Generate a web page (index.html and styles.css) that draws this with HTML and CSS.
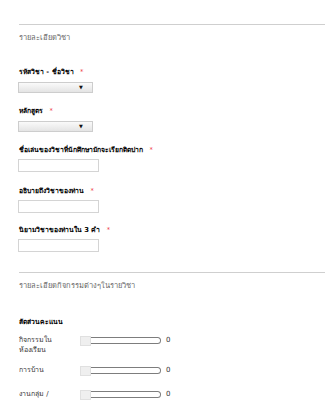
FILE: index.html
```html
<!DOCTYPE html>
<html lang="th">
<head>
<meta charset="utf-8">
<link rel="stylesheet" href="styles.css">
</head>
<body>
<div class="form">
  <div class="section">
    <div class="rule"></div>
    <div class="section-title">รายละเอียดวิชา</div>
  </div>

  <div class="field f-first">
    <div class="label">รหัสวิชา - ชื่อวิชา <span class="req">*</span></div>
    <div class="select"><span class="arrow">▼</span></div>
  </div>

  <div class="field">
    <div class="label">หลักสูตร <span class="req">*</span></div>
    <div class="select"><span class="arrow">▼</span></div>
  </div>

  <div class="field">
    <div class="label">ชื่อเล่นของวิชาที่นักศึกษามักจะเรียกติดปาก <span class="req">*</span></div>
    <div class="input"></div>
  </div>

  <div class="field f4">
    <div class="label">อธิบายถึงวิชาของท่าน <span class="req">*</span></div>
    <div class="input"></div>
  </div>

  <div class="field f5">
    <div class="label">นิยามวิชาของท่านใน 3 คำ <span class="req">*</span></div>
    <div class="input"></div>
  </div>

  <div class="section s2">
    <div class="rule"></div>
    <div class="section-title">รายละเอียดกิจกรรมต่างๆในรายวิชา</div>
  </div>

  <div class="group">
    <div class="label">สัดส่วนคะแนน</div>
    <div class="row r1">
      <div class="row-label">กิจกรรมใน<br>ห้องเรียน</div>
      <div class="slider"><span class="thumb"></span><span class="track"></span></div>
      <span class="val">0</span>
    </div>
    <div class="row r2">
      <div class="row-label">การบ้าน</div>
      <div class="slider"><span class="thumb"></span><span class="track"></span></div>
      <span class="val">0</span>
    </div>
    <div class="row r3">
      <div class="row-label">งานกลุ่ม /<br>Project</div>
      <div class="slider"><span class="thumb"></span><span class="track"></span></div>
      <span class="val">0</span>
    </div>
  </div>
</div>
</body>
</html>
```
FILE: styles.css
```css
html, body {
  margin: 0;
  padding: 0;
  background: #fff;
}
body {
  font-family: "DejaVu Sans", "Noto Sans", sans-serif;
  color: #000;
  width: 325px;
  height: 400px;
  overflow: hidden;
}
.form {
  padding-top: 24px;
  padding-left: 19px;
}
.section .rule {
  height: 1px;
  background: #cfcfcf;
}
.section-title {
  font-size: 7.5px;
  color: #666;
  margin-top: 8px;
  line-height: 10px;
}
.field {
  margin-top: 14px;
}
.f-first {
  margin-top: 25px;
}
.f4 {
  margin-top: 15px;
}
.f5 {
  margin-top: 13px;
}
.label {
  font-size: 6.8px;
  font-weight: bold;
  line-height: 9px;
  color: #000;
}
.req {
  color: #ee2a33;
  margin-left: 4px;
  font-weight: normal;
}
.select {
  margin-top: 5px;
  margin-left: -1px;
  width: 73px;
  height: 9px;
  border: 1px solid #cdcdcd;
  background: linear-gradient(#fafafa, #e4e4e4);
  position: relative;
}
.arrow {
  position: absolute;
  left: 60px;
  top: 1px;
  font-size: 5px;
  line-height: 7px;
  color: #111;
}
.input {
  margin-top: 4px;
  margin-left: -1px;
  width: 79px;
  height: 11px;
  border: 1px solid #d4d4d4;
  background: #fff;
}
.s2 {
  margin-top: 20px;
}
.group {
  margin-top: 27px;
}
.row {
  display: flex;
  align-items: flex-start;
  margin-top: 8px;
}
.r2 { margin-top: 10px; }
.r3 { margin-top: 14px; }
.row-label {
  font-size: 7px;
  line-height: 10px;
  color: #333;
  width: 61px;
}
.slider {
  display: flex;
  align-items: center;
  width: 81px;
  height: 9px;
  margin-top: 1px;
}
.thumb {
  width: 9px;
  height: 8px;
  background: #efefef;
  border: 1px solid #e0e0e0;
}
.track {
  flex: 1;
  height: 5px;
  border: 1px solid #7d7d7d;
  border-left: none;
  border-radius: 0 4px 4px 0;
  background: #fff;
}
.val {
  font-size: 7px;
  color: #333;
  margin-left: 5px;
  line-height: 9px;
  margin-top: 1px;
}
```
